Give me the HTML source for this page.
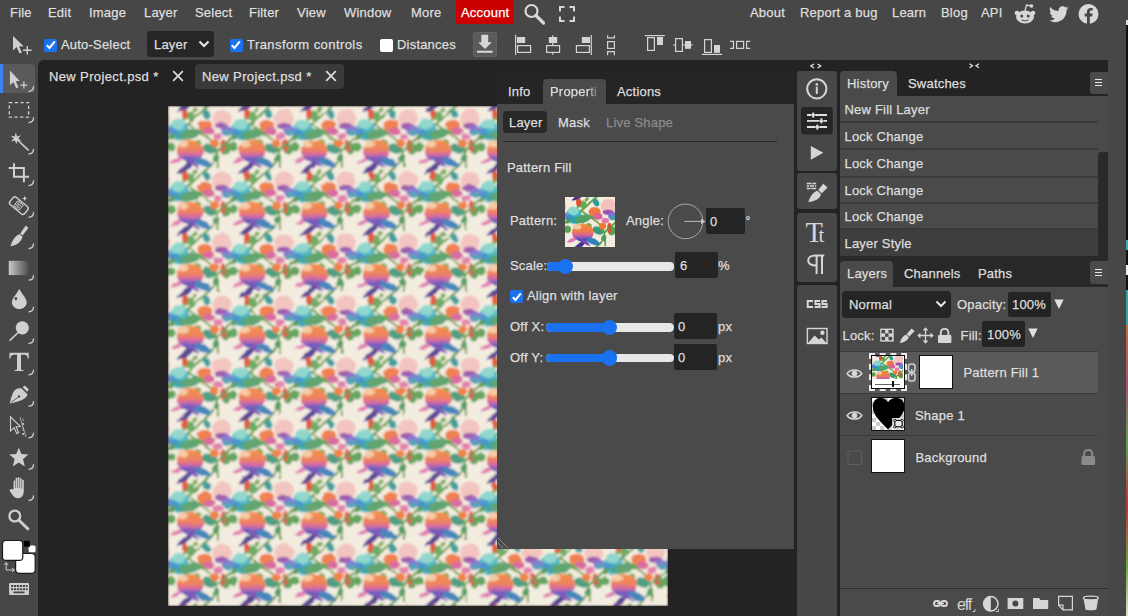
<!DOCTYPE html>
<html><head><meta charset="utf-8">
<style>
*{box-sizing:border-box}
html,body{margin:0;padding:0}
body{width:1128px;height:616px;overflow:hidden;position:relative;background:#474747;font-family:"Liberation Sans",sans-serif;font-size:13px;color:#dcdcdc}
.a{position:absolute}
.t{position:absolute;font-size:13px;line-height:13px;white-space:pre;color:#dedede;letter-spacing:0.2px;-webkit-text-stroke:0.25px currentColor}
.ic{position:absolute;overflow:visible}
.cb{position:absolute;width:13px;height:13px;background:#1a72f0;border-radius:2px}
.inp{position:absolute;background:#242424;border-radius:2px}
</style></head><body>

<!-- ===== MENU BAR ===== -->
<div class="t" style="left:10px;top:6px">File</div>
<div class="t" style="left:48px;top:6px">Edit</div>
<div class="t" style="left:89px;top:6px">Image</div>
<div class="t" style="left:144px;top:6px">Layer</div>
<div class="t" style="left:195px;top:6px">Select</div>
<div class="t" style="left:249px;top:6px">Filter</div>
<div class="t" style="left:297px;top:6px">View</div>
<div class="t" style="left:344px;top:6px">Window</div>
<div class="t" style="left:411px;top:6px">More</div>
<div class="a" style="left:456px;top:0;width:58px;height:24px;background:#cc0000;border-radius:0 0 2px 2px"></div>
<div class="t" style="left:461px;top:6px;color:#fff">Account</div>

<div class="t" style="left:750px;top:6px">About</div>
<div class="t" style="left:800px;top:6px">Report a bug</div>
<div class="t" style="left:892px;top:6px">Learn</div>
<div class="t" style="left:941px;top:6px">Blog</div>
<div class="t" style="left:981px;top:6px">API</div>


<!-- search icon -->
<svg class="ic" style="left:522px;top:2px" width="26" height="24" viewBox="0 0 26 24"><circle cx="9.5" cy="9" r="6" fill="none" stroke="#d8d8d8" stroke-width="2.2"/><path d="M14 13.5 L21.5 21" stroke="#d8d8d8" stroke-width="3.2" stroke-linecap="round"/></svg>
<!-- fullscreen -->
<svg class="ic" style="left:559px;top:6px" width="16" height="16" viewBox="0 0 16 16"><path d="M1 5.5V1H5.5 M10.5 1H15V5.5 M15 10.5V15H10.5 M5.5 15H1V10.5" fill="none" stroke="#d8d8d8" stroke-width="2"/></svg>
<!-- reddit -->
<svg class="ic" style="left:1014px;top:3px" width="22" height="22" viewBox="0 0 22 22"><ellipse cx="11" cy="14" rx="9" ry="6.5" fill="#d8d8d8"/><circle cx="3" cy="10" r="2.3" fill="#d8d8d8"/><circle cx="19" cy="10" r="2.3" fill="#d8d8d8"/><path d="M11 8 L12.5 2 L17 3" fill="none" stroke="#d8d8d8" stroke-width="1.3"/><circle cx="17.5" cy="3" r="1.8" fill="#d8d8d8"/><circle cx="7.8" cy="13" r="1.5" fill="#474747"/><circle cx="14.2" cy="13" r="1.5" fill="#474747"/><path d="M7.5 17 Q11 19 14.5 17" fill="none" stroke="#474747" stroke-width="1"/></svg>
<!-- twitter -->
<svg class="ic" style="left:1049px;top:6px" width="20" height="17" viewBox="0 0 24 20"><path d="M23.6 2.3c-.9.4-1.8.6-2.8.8 1-.6 1.8-1.6 2.1-2.7-.9.6-2 1-3.1 1.2C18.9.6 17.6 0 16.2 0c-2.7 0-4.8 2.2-4.8 4.8 0 .4 0 .8.1 1.1C7.4 5.7 3.9 3.8 1.6.9c-.4.7-.7 1.6-.7 2.4 0 1.7.9 3.2 2.2 4-.8 0-1.5-.2-2.2-.6v.1c0 2.3 1.7 4.3 3.9 4.7-.4.1-.8.2-1.3.2-.3 0-.6 0-.9-.1.6 1.9 2.4 3.3 4.5 3.4-1.7 1.3-3.7 2.1-6 2.1-.4 0-.8 0-1.2-.1 2.1 1.4 4.7 2.2 7.4 2.2 8.9 0 13.7-7.4 13.7-13.7v-.6c1-.7 1.8-1.6 2.4-2.6z" fill="#d8d8d8"/></svg>
<!-- facebook -->
<svg class="ic" style="left:1078px;top:4px" width="21" height="20" viewBox="0 0 21 20"><circle cx="10.5" cy="10" r="10" fill="#d8d8d8"/><path d="M11.8 20V12.4H14.2L14.6 9.6H11.8V7.9C11.8 7.1 12.1 6.5 13.2 6.5H14.7V4C14.4 4 13.5 3.9 12.6 3.9 10.5 3.9 9 5.2 9 7.5V9.6H6.7V12.4H9V20Z" fill="#474747"/></svg>

<!-- ===== OPTIONS BAR ===== -->
<div class="cb" style="left:44px;top:38.5px"></div>
<div class="t" style="left:61px;top:38px">Auto-Select</div>
<div class="a" style="left:147px;top:31px;width:67px;height:26px;background:#262626;border-radius:3px"></div>
<div class="t" style="left:154px;top:38px">Layer</div>
<div class="cb" style="left:230px;top:39px"></div>
<div class="t" style="left:247px;top:38px;letter-spacing:0.43px">Transform controls</div>
<div class="a" style="left:380px;top:39px;width:13px;height:13px;background:#fff;border-radius:2px"></div>
<div class="t" style="left:397px;top:38px">Distances</div>
<div class="a" style="left:473px;top:32px;width:24px;height:25px;background:#5a5a5a;border:1px solid #626262;border-radius:2px"></div>


<!-- move icon -->
<svg class="ic" style="left:0;top:28px" width="40" height="30" viewBox="0 28 40 30"><path d="M13 36 L13 50.5 L16.6 47 L19.6 53.6 L21.9 52.6 L19 46.4 L23.6 46.2 Z" fill="#d0d0d0"/><path d="M27.3 46 V54.6 M23 50.3 H31.6" stroke="#d0d0d0" stroke-width="1.4"/></svg>
<!-- checkmarks -->
<svg class="ic" style="left:44px;top:38px" width="14" height="14" viewBox="0 0 14 14"><path d="M2.8 7.3 L5.5 10 L10.8 3.4" fill="none" stroke="#fff" stroke-width="2"/></svg>
<svg class="ic" style="left:229px;top:38px" width="14" height="14" viewBox="0 0 14 14"><path d="M2.8 7.3 L5.5 10 L10.8 3.4" fill="none" stroke="#fff" stroke-width="2"/></svg>
<!-- chevron -->
<svg class="ic" style="left:198px;top:40px" width="12" height="8" viewBox="0 0 12 8"><path d="M1.5 1.5 L6 6 L10.5 1.5" fill="none" stroke="#e8e8e8" stroke-width="2"/></svg>
<!-- download arrow -->
<svg class="ic" style="left:473px;top:32px" width="24" height="25" viewBox="0 0 24 25"><path d="M8.3 2.8 H15.2 V10.3 H18.9 L12 17.1 L5.2 10.3 H8.3 Z" fill="#d6d6d6"/><rect x="4" y="18.7" width="15.5" height="2.1" fill="#d6d6d6"/></svg>
<!-- align icons -->
<svg class="ic" style="left:510px;top:30px" width="245" height="28" viewBox="510 30 245 28">
<g fill="none" stroke="#d4d4d4" stroke-width="1.2">
 <path d="M515.6 34.8 V55"/><rect x="517.6" y="45.6" width="13" height="6.8"/>
 <path d="M552.8 35.2 V37 M552.8 43 V45 M552.8 53 V54.7"/><rect x="546.6" y="45.6" width="13" height="6.8"/>
 <path d="M591.3 35 V55"/><rect x="576.4" y="45.6" width="13" height="6.8"/>
 <path d="M607.6 35.2 V37.8 H614.4 V35.2 M607.6 55.2 V51.7 H614.4 V55.2"/><rect x="607.6" y="41.6" width="6.8" height="6.8"/>
 <path d="M644.9 35.6 H664.9"/><rect x="647.6" y="37.6" width="6.8" height="12.8"/>
 <path d="M672.9 45 H675 M683 45 H685 M691 45 H693"/><rect x="675.6" y="38.6" width="6.8" height="12.8"/>
 <path d="M701.7 54.4 H722.3"/><rect x="704.6" y="39.6" width="6.8" height="12.8"/>
 <path d="M730 41.4 H733.5 V48.4 H730 M750.2 41.4 H746.6 V48.4 H750.2"/><rect x="736.6" y="41.4" width="7" height="7"/>
</g>
<g fill="#d4d4d4">
 <rect x="517" y="37" width="8.2" height="6"/>
 <rect x="548.8" y="37" width="8.4" height="6"/>
 <rect x="581.8" y="37" width="8.2" height="6"/>
 <rect x="657" y="37" width="6" height="8"/>
 <rect x="685" y="41" width="6" height="7.8"/>
 <rect x="714" y="45" width="6" height="7.8"/>
</g>
</svg>

<!-- ===== WORKSPACE ===== -->
<div class="a" style="left:38px;top:60px;width:1090px;height:556px;background:#232323;border-radius:6px 0 0 0"></div>
<!-- tabs -->
<div class="t" style="left:49px;top:70px;letter-spacing:0.37px">New Project.psd *</div>
<div class="a" style="left:195px;top:64px;width:148.5px;height:25px;background:#3a3a3a;border-radius:4px"></div>
<div class="t" style="left:202px;top:70px;letter-spacing:0.37px">New Project.psd *</div>

<svg class="ic" style="left:172px;top:70px" width="12" height="12" viewBox="0 0 12 12"><path d="M1.2 1.2 L10.8 10.8 M10.8 1.2 L1.2 10.8" stroke="#dcdcdc" stroke-width="1.7"/></svg>
<svg class="ic" style="left:325px;top:70px" width="12" height="12" viewBox="0 0 12 12"><path d="M1.2 1.2 L10.8 10.8 M10.8 1.2 L1.2 10.8" stroke="#dcdcdc" stroke-width="1.7"/></svg>
<!-- canvas -->
<svg class="a" style="left:168px;top:106px" width="500" height="500">
<defs>
<filter id="bl" x="0" y="0" width="500" height="500" filterUnits="userSpaceOnUse"><feTurbulence type="fractalNoise" baseFrequency="0.12" numOctaves="2" seed="3" result="n"/><feDisplacementMap in="SourceGraphic" in2="n" scale="3" xChannelSelector="R" yChannelSelector="G" result="d"/><feGaussianBlur in="d" stdDeviation="1.1" result="b"/><feComponentTransfer in="b"><feFuncR type="linear" slope="0.96" intercept="0.04"/><feFuncG type="linear" slope="0.96" intercept="0.04"/><feFuncB type="linear" slope="0.96" intercept="0.04"/></feComponentTransfer></filter>
<linearGradient id="fg" x1="0" y1="0" x2="0" y2="1"><stop offset="0" stop-color="#f28a34"/><stop offset="0.45" stop-color="#ee7a50"/><stop offset="0.65" stop-color="#d8609c"/><stop offset="0.85" stop-color="#6a50c0"/><stop offset="1" stop-color="#4a3aa0"/></linearGradient>
<g id="tl">
 <path d="M-14 46 L0 33 C4 30 8 28 10 26 C14 23 17 20 20 18 C24 15 27 12 30 9 C33 6 37 3 40 0 L46 -6" fill="none" stroke="#5f9a3a" stroke-width="2.3"/>
 <path d="M20 18 C24 21 27 23 30 25 C34 28 37 30 40 32 C44 35 46 38 47 40 C49 46 50 54 50 62" fill="none" stroke="#6e9e44" stroke-width="2.1"/>
 <g transform="translate(11.5 24) scale(1.15) translate(-10 -21)">
 <ellipse cx="9.5" cy="21" rx="8.5" ry="9" fill="#3fb6c2"/>
 <ellipse cx="9" cy="16" rx="6" ry="4.5" fill="#8ad6cc"/>
 <ellipse cx="5" cy="23.5" rx="4" ry="3.5" fill="#2f8fd0"/>
 <ellipse cx="13" cy="26" rx="6" ry="4" fill="#2aa0a0"/>
 </g>
 <g transform="translate(22 28) scale(1.25) translate(-22 -28)"><ellipse cx="22.5" cy="28" rx="8" ry="4" fill="#52a066" transform="rotate(-15 22.5 28)"/></g>
 <g transform="translate(41 42) scale(1.3) translate(-41 -42)"><ellipse cx="41" cy="42.5" rx="5.5" ry="3.5" fill="#3a9a7a" transform="rotate(25 41 42.5)"/></g>
 <ellipse cx="22" cy="10" rx="4.5" ry="4.5" fill="#5ea85a"/>
 <ellipse cx="3" cy="41" rx="4.5" ry="4.5" fill="#5aa050"/>
 <ellipse cx="58" cy="43" rx="4.5" ry="5.5" fill="#58a04e"/>
 <ellipse cx="38.5" cy="8" rx="3.5" ry="5" fill="#2a9a9a" transform="rotate(-30 38.5 8)"/>
 <ellipse cx="30" cy="36" rx="3.5" ry="2.5" fill="#6aa84a" transform="rotate(30 30 36)"/>
 <ellipse cx="4" cy="31" rx="3.5" ry="2.5" fill="#4e9a50" transform="rotate(-40 4 31)"/>
 <ellipse cx="17" cy="12" rx="3" ry="2" fill="#6aa84a" transform="rotate(-40 17 12)"/>
 <ellipse cx="33" cy="26" rx="3.5" ry="2" fill="#5aa050" transform="rotate(35 33 26)"/>
 <ellipse cx="48" cy="52" rx="3" ry="4" fill="#4a9a58" transform="rotate(20 48 52)"/>
 <ellipse cx="27" cy="4" rx="3" ry="2" fill="#74a848" transform="rotate(-45 27 4)"/>
 <!-- pink flower -->
 <g transform="translate(50 24) scale(1.15) translate(-47 -21)">
 <ellipse cx="50.5" cy="11" rx="8.5" ry="8" fill="#f3c2be"/>
 <ellipse cx="50" cy="17.5" rx="6" ry="2.8" fill="#9a50a8"/>
 <ellipse cx="35.5" cy="17" rx="6.5" ry="5" fill="#f07840"/>
 <ellipse cx="39" cy="22" rx="5" ry="3.5" fill="#d8609a"/>
 <ellipse cx="55" cy="21.5" rx="5" ry="4.5" fill="#8070d0"/>
 <ellipse cx="55.5" cy="23.5" rx="3.5" ry="2.5" fill="#40a0b0"/>
 <ellipse cx="47" cy="26.5" rx="4" ry="3" fill="#e07aa8"/>
 <ellipse cx="44" cy="32.5" rx="4" ry="3.5" fill="#f07a30"/>
 <ellipse cx="51.5" cy="34.5" rx="2.5" ry="5.5" fill="#e04a40"/>
 </g>
 <!-- big flower -->
 <g id="bf">
 <g transform="translate(21 49) scale(1.15) translate(-21 -47)">
 <ellipse cx="22" cy="43.5" rx="11.5" ry="9.5" fill="url(#fg)"/>
 <ellipse cx="16" cy="37.5" rx="4.5" ry="3" fill="#f5c8a0"/>
 <path d="M27 49 C32 49 38 51 41 57 C36 58 30 56 26 53 Z" fill="#2f7fb8"/>
 <path d="M22 52 C18 55 13 59 10 63 C16 63 21 60 24 55 Z" fill="#4a3090"/>
 <path d="M13 49 C10 50 6 52 5 54 C9 55 13 53 15 51 Z" fill="#e07ab0"/>
 <path d="M20 52 C22 55 26 57 30 58 C28 55 25 52 22 51 Z" fill="#7a48b8"/>
 <ellipse cx="17.5" cy="65" rx="2.5" ry="4" fill="#e0502a"/>
 </g>
 </g>
 <use href="#bf" y="-62"/>
</g>
<pattern id="pt" width="62" height="62" patternUnits="userSpaceOnUse">
 <rect width="62" height="62" fill="#f3ecdf"/>
 <use href="#tl"/><use href="#tl" x="62"/><use href="#tl" x="-62"/>
 <use href="#tl" y="62"/><use href="#tl" x="62" y="62"/><use href="#tl" x="-62" y="62"/>
 <use href="#tl" y="-62"/><use href="#tl" x="62" y="-62"/><use href="#tl" x="-62" y="-62"/>
</pattern>
</defs>
<g filter="url(#bl)"><rect x="-10" y="-10" width="520" height="520" fill="url(#pt)"/></g>
</svg>


<!-- ===== LEFT TOOLBAR ===== -->
<div class="a" style="left:0;top:60px;width:38px;height:556px;background:#474747"></div>
<div class="a" style="left:0;top:64px;width:35px;height:29px;background:#5a5a5a;border-radius:0 4px 4px 0"></div>
<div class="a" style="left:0;top:64px;width:3px;height:29px;background:#3b82f6"></div>


<svg class="ic" style="left:0;top:60px" width="38" height="556" viewBox="0 60 38 556">
<defs><path id="cm" d="M0 0 Q0 5 -5 5" fill="none" stroke="#cfcfcf" stroke-width="1.3"/></defs>
<g fill="#d0d0d0">
 <!-- move -->
 <path d="M9.9 70.5 L9.9 85.2 L13.4 81.9 L16.2 88.3 L18.4 87.3 L15.7 81 L19.7 80.9 Z"/>
 <path d="M23.9 81.6 V88.6 M20.4 85.1 H27.4" stroke="#d0d0d0" stroke-width="1.3"/>
 <use href="#cm" x="33.5" y="86.3"/>
 <!-- rect select -->
 <rect x="9.3" y="102.6" width="19.3" height="14.6" fill="none" stroke="#d0d0d0" stroke-width="1.3" stroke-dasharray="3.2 2.4"/>
 <use href="#cm" x="33.5" y="117.6"/>
 <!-- wand -->
 <path d="M15.9 132.5 L17 136.4 L21 135.2 L18.2 138.3 L21.4 141 L17.4 140.3 L16.4 144.2 L15 140.4 L11 141.6 L13.8 138.5 L10.6 135.8 L14.6 136.5 Z"/>
 <path d="M17 139.5 L28.6 150.3" stroke="#d0d0d0" stroke-width="1.6"/>
 <use href="#cm" x="33.5" y="149"/>
 <!-- crop -->
 <path d="M14 163.2 V176.7 H29 M8.7 168 H23.9 V182.2" fill="none" stroke="#d0d0d0" stroke-width="2"/>
 <use href="#cm" x="33.5" y="180.6"/>
 <!-- heal -->
 <g transform="rotate(40 19 205.5)"><rect x="9.5" y="201" width="19" height="9.5" rx="2.5" fill="none" stroke="#d0d0d0" stroke-width="1.4"/><rect x="15" y="202.5" width="7" height="6.5" fill="none" stroke="#d0d0d0" stroke-width="0.9"/><path d="M17 202.5 V209 M19 202.5 V209 M15 204.7 H22 M15 206.9 H22" stroke="#d0d0d0" stroke-width="0.7"/></g>
 <path d="M24.7 195.8 L25.6 198 L27.8 198.2 L25.6 198.9 L24.7 201 L23.8 198.9 L21.6 198.2 L23.8 198 Z"/>
 <use href="#cm" x="33.5" y="212.3"/>
 <!-- brush -->
 <path d="M25.8 225.6 L28.4 228 L22.6 235.6 L20.2 233.6 Z"/>
 <path d="M19.6 234 L22.4 236.4 C22 241 17.5 245 10.4 246.2 C12 241.5 14.5 236 19.6 234 Z"/>
 <use href="#cm" x="33.5" y="243.6"/>
 <!-- gradient -->
 <use href="#cm" x="33.5" y="275.2"/>
 <!-- drop -->
 <path d="M19.3 289 C22 294 26.7 298.5 26.7 302.2 C26.7 306 23.4 309 19.3 309 C15.2 309 11.9 306 11.9 302.2 C11.9 298.5 16.6 294 19.3 289 Z"/>
 <ellipse cx="15.9" cy="298.6" rx="1.4" ry="1.6" fill="#474747"/>
 <use href="#cm" x="33.5" y="306.8"/>
 <!-- dodge -->
 <circle cx="22.3" cy="327.8" r="6.6"/>
 <path d="M18.2 332.5 L9.6 340.7" stroke="#d0d0d0" stroke-width="1.6"/>
 <use href="#cm" x="33.5" y="338.4"/>
 <!-- T -->
 <path d="M9.6 352.8 H28.6 L28.9 358.5 L27.8 358.5 C27.3 355.5 26.4 354.8 23.6 354.8 H21 V368.7 C21 369.8 21.6 370 23.4 370.1 V371 H14.6 V370.1 C16.5 370 17 369.8 17 368.7 V354.8 H14.6 C11.8 354.8 10.9 355.5 10.4 358.5 L9.3 358.5 Z"/>
 <use href="#cm" x="33.5" y="369.8"/>
 <!-- pen -->
 <path d="M22.6 387.2 L24.8 385.6 L28.8 389.6 L27.2 391.8 Z"/>
 <path d="M21.6 388.4 L27.6 394.4 C26.4 398.5 21 401 9.6 403.6 C12.2 392.4 14.6 386.8 21.6 388.4 Z"/>
 <circle cx="19" cy="396.4" r="1.2" fill="#474747"/>
 <path d="M18.5 397 L10.8 402.5" stroke="#474747" stroke-width="0.8"/>
 <use href="#cm" x="33.5" y="401.2"/>
 <!-- path select -->
 <path d="M10.5 416.8 L10.5 431 L14 427.6 L16.8 433.6 L18.7 432.7 L16.1 426.8 L20.4 426.6 Z" fill="none" stroke="#d0d0d0" stroke-width="1.1"/>
 <circle cx="23.1" cy="424" r="1.1"/><circle cx="23.1" cy="434" r="1.1"/>
 <path d="M23.1 418.5 V421 M23.1 427 V431 M20 417 L26 437" stroke="#d0d0d0" stroke-width="0.7"/>
 <use href="#cm" x="33.5" y="432.8"/>
 <!-- star -->
 <path d="M18.8 447.8 L21.4 454.1 L28.4 454.6 L23 459 L24.8 466.4 L18.8 462.4 L12.8 466.4 L14.6 459 L9.2 454.6 L16.2 454.1 Z"/>
 <use href="#cm" x="33.5" y="464.3"/>
 <!-- hand -->
 <path d="M13.6 489 V481.5 C13.6 480.2 15.6 480.2 15.6 481.5 V478.8 C15.6 477.5 17.6 477.5 17.6 478.8 V478.2 C17.6 476.9 19.6 476.9 19.6 478.2 V479.2 C19.6 477.9 21.6 477.9 21.6 479.2 L21.9 480.6 C21.9 479.4 23.8 479.4 23.8 480.6 V491 C23.8 495.5 21.6 498.2 18 498.2 C15.2 498.2 13.5 496.6 11.8 494 L9.8 490.8 C9.2 489.6 10.8 488.2 12 489.4 Z"/>
 <path d="M15.6 481 V488 M17.6 478.5 V488 M19.6 478.5 V488 M21.7 480 V488.5" stroke="#474747" stroke-width="0.6"/>
 <use href="#cm" x="33.5" y="495.4"/>
 <!-- zoom -->
 <circle cx="14.8" cy="516" r="5.4" fill="none" stroke="#d0d0d0" stroke-width="2.3"/>
 <path d="M19 520.2 L27.8 528.8" stroke="#d0d0d0" stroke-width="3" stroke-linecap="round"/>
 <!-- keyboard -->
 <rect x="9.1" y="583" width="19.9" height="12" rx="1" />
 <g fill="#474747"><rect x="11" y="585" width="2.2" height="2"/><rect x="14" y="585" width="2.2" height="2"/><rect x="17" y="585" width="2.2" height="2"/><rect x="20" y="585" width="2.2" height="2"/><rect x="23" y="585" width="2.2" height="2"/><rect x="26" y="585" width="1.6" height="2"/>
 <rect x="11" y="588.2" width="2.2" height="2"/><rect x="14" y="588.2" width="2.2" height="2"/><rect x="17" y="588.2" width="2.2" height="2"/><rect x="20" y="588.2" width="2.2" height="2"/><rect x="23" y="588.2" width="2.2" height="2"/><rect x="26" y="588.2" width="1.6" height="2"/>
 <rect x="13.5" y="591.5" width="11" height="1.8"/></g>
</g>
<defs><linearGradient id="gr" x1="0" x2="1"><stop offset="0" stop-color="#c8c8c8"/><stop offset="1" stop-color="#505050"/></linearGradient></defs>
<rect x="8.75" y="260.8" width="19.5" height="14.3" fill="url(#gr)"/>
<!-- color swatches -->
<rect x="15.6" y="553.5" width="19.6" height="19.8" rx="3.5" fill="#fff" stroke="#1a1a1a" stroke-width="1.2"/>
<rect x="2.5" y="540.5" width="20.3" height="19.9" rx="3.5" fill="#fff" stroke="#1a1a1a" stroke-width="1.2"/>
<rect x="28.6" y="545.6" width="7" height="6.7" rx="1.5" fill="#fff"/>
<rect x="23.5" y="540.5" width="6.5" height="6.5" rx="1.2" fill="#000" stroke="#555" stroke-width="0.5"/>
<path d="M6.2 563.5 V570 H13.5 M4.4 565 L6.2 562.4 L8 565 M12 568.2 L14.6 570 L12 571.8" fill="none" stroke="#cfcfcf" stroke-width="1"/>
</svg>

<!-- ===== PROPERTIES PANEL ===== -->
<div class="a" style="left:497px;top:71px;width:297px;height:33px;background:#252525"></div>
<div class="a" style="left:543px;top:79px;width:63px;height:26px;background:#4a4a4a;border-radius:4px 4px 0 0"></div>
<div class="t" style="left:508px;top:85px">Info</div>
<div class="t" style="left:550px;top:85px;-webkit-mask-image:linear-gradient(90deg,#000 38px,transparent 50px)">Properti</div>
<div class="t" style="left:617px;top:85px">Actions</div>
<div class="a" style="left:497px;top:104px;width:297px;height:445px;background:#4a4a4a"></div>


<!-- properties content -->
<div class="a" style="left:503px;top:111px;width:44px;height:22px;background:#282828;border-radius:4px"></div>
<div class="t" style="left:509px;top:116px">Layer</div>
<div class="t" style="left:558px;top:116px">Mask</div>
<div class="t" style="left:606px;top:116px;color:#8a8a8a">Live Shape</div>
<div class="a" style="left:503px;top:141px;width:274px;height:1px;background:#2a2a2a"></div>
<div class="t" style="left:507px;top:161px">Pattern Fill</div>
<div class="t" style="left:510px;top:214px">Pattern:</div>
<div class="a" style="left:565px;top:197px;width:50px;height:50px;overflow:hidden;background:#f3ecdf">
<svg width="50" height="50" viewBox="0 1 62 62" style="display:block;filter:blur(0.7px)"><rect x="-62" y="-62" width="200" height="200" fill="url(#pt)"/></svg>
</div>
<div class="t" style="left:626px;top:214px">Angle:</div>
<svg class="ic" style="left:666px;top:202px" width="42" height="40" viewBox="666 202 42 40"><circle cx="685.5" cy="221.4" r="17.3" fill="none" stroke="#a8a8a8" stroke-width="1"/><path d="M684.3 221.4 H702" stroke="#b8b8b8" stroke-width="1"/><path d="M701 218.8 L705.6 221.4 L701 224 Z" fill="#c8c8c8"/></svg>
<div class="inp" style="left:706px;top:208px;width:39px;height:25.6px"></div>
<div class="t" style="left:710px;top:215px">0</div>
<div class="t" style="left:745.5px;top:215px;font-size:12px">°</div>

<div class="t" style="left:510px;top:259px">Scale:</div>
<div class="a" style="left:547px;top:262.4px;width:127px;height:8.2px;background:#e8e8e8;border-radius:4px"></div>
<div class="a" style="left:547px;top:262.4px;width:19px;height:8.2px;background:#1a72f0;border-radius:4px 0 0 4px"></div>
<div class="a" style="left:558px;top:259px;width:15.4px;height:15.4px;background:#1a72f0;border-radius:50%"></div>
<div class="inp" style="left:675px;top:252px;width:43px;height:25.7px"></div>
<div class="t" style="left:680px;top:259px">6</div>
<div class="t" style="left:718px;top:259px">%</div>

<div class="cb" style="left:510px;top:290px"></div>
<svg class="ic" style="left:510px;top:290px" width="14" height="14" viewBox="0 0 14 14"><path d="M2.8 7.3 L5.5 10 L10.8 3.4" fill="none" stroke="#fff" stroke-width="2"/></svg>
<div class="t" style="left:527px;top:289px">Align with layer</div>

<div class="t" style="left:510px;top:320px">Off X:</div>
<div class="a" style="left:546px;top:323px;width:128px;height:8.8px;background:#e8e8e8;border-radius:4.4px"></div>
<div class="a" style="left:546px;top:323px;width:64px;height:8.8px;background:#1a72f0;border-radius:4.4px 0 0 4.4px"></div>
<div class="a" style="left:602px;top:319.7px;width:15.4px;height:15.4px;background:#1a72f0;border-radius:50%"></div>
<div class="inp" style="left:674px;top:313px;width:43px;height:25.8px"></div>
<div class="t" style="left:678px;top:320px">0</div>
<div class="t" style="left:718px;top:320px">px</div>

<div class="t" style="left:510px;top:351px">Off Y:</div>
<div class="a" style="left:546px;top:353.5px;width:128px;height:8.8px;background:#e8e8e8;border-radius:4.4px"></div>
<div class="a" style="left:546px;top:353.5px;width:64px;height:8.8px;background:#1a72f0;border-radius:4.4px 0 0 4.4px"></div>
<div class="a" style="left:602px;top:350.2px;width:15.4px;height:15.4px;background:#1a72f0;border-radius:50%"></div>
<div class="inp" style="left:674px;top:344px;width:43px;height:25.6px"></div>
<div class="t" style="left:678px;top:351px">0</div>
<div class="t" style="left:718px;top:351px">px</div>
<svg class="ic" style="left:497px;top:537px" width="14" height="12" viewBox="0 0 14 12"><path d="M1 1 L11 11 M1 6 L6 11" stroke="#9a9a9a" stroke-width="0.8"/></svg>

<!-- ===== ICON COLUMN ===== -->
<div class="a" style="left:797px;top:71px;width:40px;height:100px;background:#474747;border-radius:3px"></div>
<div class="a" style="left:797px;top:173px;width:40px;height:36px;background:#474747;border-radius:3px"></div>
<div class="a" style="left:797px;top:213px;width:40px;height:69px;background:#474747;border-radius:3px"></div>
<div class="a" style="left:797px;top:285px;width:40px;height:331px;background:#474747;border-radius:3px 3px 0 0"></div>


<svg class="ic" style="left:797px;top:60px" width="40" height="300" viewBox="797 60 40 300">
<path d="M814 64 L810.8 66 L814 68 M817.6 64 L820.8 66 L817.6 68" fill="none" stroke="#e8e8e8" stroke-width="1.2"/>
<circle cx="816.8" cy="88.8" r="9.6" fill="none" stroke="#d6d6d6" stroke-width="2"/>
<circle cx="816.8" cy="84.4" r="1.3" fill="#d6d6d6"/><rect x="815.8" y="86.7" width="2" height="7.2" fill="#d6d6d6"/>
<rect x="801" y="107" width="31.7" height="27.5" rx="3" fill="#262626"/>
<g stroke="#e0e0e0" stroke-width="1.8">
<path d="M807 115 H827 M807 120.8 H827 M807 127 H827"/>
</g>
<g fill="#e0e0e0"><rect x="812.2" y="112.6" width="2" height="5"/><rect x="820.4" y="118.3" width="2" height="5"/><rect x="816.3" y="124.6" width="2" height="5"/></g>
<g stroke="#262626" stroke-width="1"><path d="M811.7 115 H811 M814.7 115 H815.4 M819.9 120.8 H819.3 M822.9 120.8 H823.6 M815.8 127 H815.2 M818.8 127 H819.5"/></g>
<path d="M810.8 145.9 L823.3 152.8 L810.8 159.7 Z" fill="#d6d6d6"/>
<!-- brush group -->
<g stroke="#d6d6d6" stroke-width="1.5"><path d="M806.7 183.4 H816.2 M806.7 186 H816.2 M806.7 188.6 H816.2"/></g>
<g stroke="#474747" stroke-width="0.9"><path d="M812 182.5 V184.2 M809.5 185.2 V187 M814.5 185.2 V187 M811 187.8 V189.5"/></g>
<path d="M823.2 183.8 L827.6 187.6 L821.8 193.2 L818.2 190 Z" fill="#d6d6d6"/>
<path d="M817.4 190.8 L821 194 C820.2 198.4 815.8 201.4 808.4 202 C810 197 812.4 192.6 817.4 190.8 Z" fill="#d6d6d6"/>
<!-- Tt -->
<text x="805.6" y="242" font-family="Liberation Serif" font-size="28.5" fill="#d6d6d6">T</text>
<text x="818.6" y="242" font-family="Liberation Serif" font-size="21" fill="#d6d6d6">t</text>
<path d="M815.5 255.5 H824.3 M816.6 255.5 V274 M822 255.5 V274 M816.6 265.5 C811 265.5 808.2 263.4 808.2 260.5 C808.2 257.6 811 255.5 815.5 255.5" fill="none" stroke="#d6d6d6" stroke-width="2"/>
<!-- CSS -->
<g fill="none" stroke="#d6d6d6" stroke-width="2"><path d="M813 301 H807.7 V307.1 H813 M820 301 H815.4 V304 H819.6 V307.1 H814.6 M827 301 H822.4 V304 H826.6 V307.1 H821.6"/></g>
<!-- image -->
<rect x="807.4" y="328.5" width="19.6" height="15" fill="none" stroke="#d6d6d6" stroke-width="1.4"/>
<path d="M808 343 L814.6 335.5 L819 339.6 L821.4 337.6 L826.4 343 Z" fill="#d6d6d6"/>
<circle cx="822.4" cy="332.8" r="2.2" fill="#d6d6d6"/>
</svg>

<!-- ===== RIGHT PANELS ===== -->
<div class="a" style="left:1108px;top:60px;width:18px;height:556px;background:#474747"></div>
<div class="a" style="left:1126px;top:20px;width:2px;height:5px;background:#ddd"></div><div class="a" style="left:1126px;top:25px;width:2px;height:591px;background:linear-gradient(#111 0,#111 215px,#3ab0b0 215px,#3ab0b0 225px,#111 225px,#111 240px,#eee 240px,#eee 250px,#111 250px,#111 265px,#40a0a0 265px,#40a0a0 300px,#c07040 300px,#a05070 360px,#60a050 420px,#c03040 480px,#70a040 540px,#e0e0d0 591px)"></div>
<div class="a" style="left:840px;top:96px;width:268px;height:161px;background:#4a4a4a"></div>
<div class="a" style="left:840px;top:71px;width:57px;height:26px;background:#4a4a4a;border-radius:4px 4px 0 0"></div>
<div class="t" style="left:847px;top:77px">History</div>
<div class="t" style="left:908px;top:77px">Swatches</div>
<div class="a" style="left:840px;top:287px;width:268px;height:329px;background:#4a4a4a"></div>


<!-- markers -->
<svg class="ic" style="left:960px;top:60px" width="30" height="12" viewBox="960 60 30 12"><path d="M969.5 63.8 L972.5 65.8 L969.5 67.8 M979 63.8 L976 65.8 L979 67.8" fill="none" stroke="#e8e8e8" stroke-width="1.2"/></svg>
<!-- history menu btn -->
<div class="a" style="left:1090px;top:71.5px;width:18px;height:22.5px;background:#4a4a4a;border-radius:3px 0 0 3px"></div>
<svg class="ic" style="left:1090px;top:71px" width="18" height="24" viewBox="0 0 18 24"><path d="M5 8.5 H12 M5 11.5 H12 M5 14.5 H12" stroke="#e8e8e8" stroke-width="1"/></svg>
<!-- history rows -->
<div class="a" style="left:840px;top:121px;width:258px;height:2px;background:#3a3a3a"></div>
<div class="a" style="left:840px;top:148px;width:258px;height:2px;background:#3a3a3a"></div>
<div class="a" style="left:840px;top:175.5px;width:258px;height:2px;background:#3a3a3a"></div>
<div class="a" style="left:840px;top:202px;width:258px;height:2px;background:#3a3a3a"></div>
<div class="a" style="left:840px;top:228px;width:258px;height:2px;background:#3a3a3a"></div>
<div class="a" style="left:840px;top:230px;width:258px;height:26px;background:#3e3e3e"></div>
<div class="a" style="left:1098px;top:151.5px;width:10px;height:105px;background:#2a2a2a;border-radius:3px 0 0 0"></div>
<div class="t" style="left:844.5px;top:103px">New Fill Layer</div>
<div class="t" style="left:844.5px;top:130px">Lock Change</div>
<div class="t" style="left:844.5px;top:157px">Lock Change</div>
<div class="t" style="left:844.5px;top:184px">Lock Change</div>
<div class="t" style="left:844.5px;top:210px">Lock Change</div>
<div class="t" style="left:844.5px;top:237px">Layer Style</div>
<!-- layers header -->
<div class="a" style="left:840px;top:256px;width:268px;height:31px;background:#282828"></div>
<div class="a" style="left:840px;top:261px;width:53px;height:27px;background:#4a4a4a;border-radius:4px 4px 0 0"></div>
<div class="t" style="left:847px;top:267px">Layers</div>
<div class="t" style="left:904px;top:267px">Channels</div>
<div class="t" style="left:978px;top:267px">Paths</div>
<div class="a" style="left:1090px;top:261px;width:18px;height:23px;background:#4a4a4a;border-radius:3px 0 0 3px"></div>
<svg class="ic" style="left:1090px;top:261px" width="18" height="24" viewBox="0 0 18 24"><path d="M5 8.5 H12 M5 11.5 H12 M5 14.5 H12" stroke="#e8e8e8" stroke-width="1"/></svg>
<!-- blend + opacity -->
<div class="a" style="left:842px;top:291px;width:109px;height:26.5px;background:#252525;border-radius:4px"></div>
<div class="t" style="left:849px;top:298px">Normal</div>
<svg class="ic" style="left:935px;top:300px" width="12" height="8" viewBox="0 0 12 8"><path d="M1.5 1.5 L6 6 L10.5 1.5" fill="none" stroke="#e8e8e8" stroke-width="2"/></svg>
<div class="t" style="left:957px;top:298px">Opacity:</div>
<div class="inp" style="left:1008px;top:291.5px;width:43px;height:25px"></div>
<div class="t" style="left:1012px;top:298px">100%</div>
<svg class="ic" style="left:1053px;top:298px" width="12" height="12" viewBox="0 0 12 12"><path d="M1.3 1.5 H10.7 L6 10.9 Z" fill="#e0e0e0"/></svg>
<div class="t" style="left:842.5px;top:329px">Lock:</div>
<div class="t" style="left:960.5px;top:329px">Fill:</div>
<div class="inp" style="left:982px;top:321.3px;width:43px;height:25.7px"></div>
<div class="t" style="left:987px;top:328px">100%</div>
<svg class="ic" style="left:1027px;top:327px" width="12" height="12" viewBox="0 0 12 12"><path d="M1.3 1.5 H10.7 L6 10.9 Z" fill="#e0e0e0"/></svg>
<svg class="ic" style="left:876px;top:324px" width="80" height="22" viewBox="876 324 80 22">
 <rect x="880.2" y="328.6" width="13.5" height="13" fill="#d6d6d6"/>
 <g fill="#474747"><rect x="881.5" y="330" width="3.6" height="3.4"/><rect x="888.5" y="330" width="3.6" height="3.4"/><rect x="885.1" y="333.4" width="3.4" height="3.4"/><rect x="881.5" y="336.8" width="3.6" height="3.4"/><rect x="888.5" y="336.8" width="3.6" height="3.4"/></g>
 <path d="M911.6 328.4 L914.6 331 L909.4 336.4 L906.6 334 Z" fill="#d6d6d6"/>
 <path d="M906 334.6 L908.8 337 C908 340.4 904.4 342.6 899.8 343 C901 339 903 335.8 906 334.6 Z" fill="#d6d6d6"/>
 <path d="M925.5 328.5 V342.5 M918.5 335.5 H932.5" stroke="#d6d6d6" stroke-width="1.3"/>
 <path d="M923.5 330.5 L925.5 328.3 L927.5 330.5 M923.5 340.5 L925.5 342.7 L927.5 340.5 M920.5 333.5 L918.3 335.5 L920.5 337.5 M930.5 333.5 L932.7 335.5 L930.5 337.5" fill="none" stroke="#d6d6d6" stroke-width="1.3"/>
 <path d="M940.8 335.2 V332.6 C940.8 330.2 942.6 328.8 944.6 328.8 C946.6 328.8 948.4 330.2 948.4 332.6 V335.2" fill="none" stroke="#d6d6d6" stroke-width="1.8"/>
 <rect x="938" y="335" width="13.4" height="8" rx="1" fill="#d6d6d6"/>
</svg>
<!-- layer rows -->
<div class="a" style="left:840px;top:350.5px;width:258px;height:1.5px;background:#3a3a3a"></div>
<div class="a" style="left:840px;top:352px;width:258px;height:40.5px;background:#5a5a5a"></div>
<div class="a" style="left:840px;top:392.5px;width:258px;height:1.5px;background:#3a3a3a"></div>
<div class="a" style="left:840px;top:434.5px;width:258px;height:1.5px;background:#3a3a3a"></div>

<svg class="ic" style="left:844px;top:360px" width="22" height="110" viewBox="844 360 22 110">
 <g fill="none" stroke="#d6d6d6" stroke-width="1.5"><path d="M847.2 373.5 C850 368.8 858.8 368.8 861.8 373.5 C858.8 378.2 850 378.2 847.2 373.5 Z"/><path d="M847.2 415.5 C850 410.8 858.8 410.8 861.8 415.5 C858.8 420.2 850 420.2 847.2 415.5 Z"/></g>
 <circle cx="854.5" cy="373.5" r="2.8" fill="#d6d6d6"/><circle cx="854.5" cy="415.5" r="2.8" fill="#d6d6d6"/>
 <rect x="848" y="451" width="13.6" height="13.4" rx="1" fill="none" stroke="#5e5e5e" stroke-width="1.2"/>
</svg>
<!-- pattern fill thumb -->
<div class="a" style="left:869px;top:353px;width:38px;height:38px;border:2px dashed #e8e8e8"></div>
<div class="a" style="left:871px;top:355px;width:34px;height:33.5px;background:#fff;border:1.5px solid #111;overflow:hidden">
<svg width="31" height="23" viewBox="0 4 62 46" style="display:block;position:absolute;left:0;top:0;filter:blur(0.4px)"><rect x="-62" y="-62" width="200" height="200" fill="url(#pt)"/></svg>
<div class="a" style="left:3px;top:27.5px;width:25px;height:1.5px;background:#666"></div>
<div class="a" style="left:19.5px;top:25px;width:2px;height:6px;background:#111"></div>
</div>
<svg class="ic" style="left:907px;top:363px" width="10" height="20" viewBox="0 0 10 20"><rect x="1.5" y="1" width="6.5" height="8" rx="2.5" fill="none" stroke="#cfcfcf" stroke-width="1.5"/><rect x="1.5" y="10" width="6.5" height="8" rx="2.5" fill="none" stroke="#cfcfcf" stroke-width="1.5"/><path d="M4.75 6 V13" stroke="#cfcfcf" stroke-width="1.5"/></svg>
<div class="a" style="left:919px;top:355px;width:34px;height:33.5px;background:#fff;border:1.5px solid #111"></div>
<div class="t" style="left:963.5px;top:366px">Pattern Fill 1</div>
<!-- shape thumb -->
<div class="a" style="left:871px;top:396.5px;width:34px;height:34.5px;border:1.5px solid #111;overflow:hidden;background-color:#fff;background-image:linear-gradient(45deg,#ccc 25%,transparent 25%,transparent 75%,#ccc 75%),linear-gradient(45deg,#ccc 25%,transparent 25%,transparent 75%,#ccc 75%);background-size:8px 8px;background-position:0 0,4px 4px">
<svg width="34" height="34" viewBox="0 0 34 34" style="position:absolute;left:-1.5px;top:-1.5px"><path d="M17 6.2 C14 0 1.8 -0.5 1.8 11 C1.8 19 10 26 17 33.4 C24 26 33.6 19 33.6 11 C33.6 -0.5 20 0 17 6.2 Z" fill="#000"/><rect x="21.2" y="22" width="11.5" height="10.5" fill="#e8e8e8"/><rect x="23.8" y="24.4" width="7.4" height="6.4" fill="none" stroke="#000" stroke-width="1.1"/><g fill="#fff" stroke="#000" stroke-width="0.9"><circle cx="23.8" cy="24.4" r="1.2"/><circle cx="31.2" cy="24.4" r="1.2"/><circle cx="23.8" cy="30.8" r="1.2"/><circle cx="31.2" cy="30.8" r="1.2"/></g></svg>
</div>
<div class="t" style="left:915px;top:409px">Shape 1</div>
<div class="a" style="left:871px;top:439px;width:34px;height:34px;background:#fff;border:1.5px solid #111"></div>
<div class="t" style="left:915.5px;top:451px">Background</div>
<svg class="ic" style="left:1080px;top:448px" width="17" height="18" viewBox="0 0 17 18"><path d="M4.2 8 V5.8 C4.2 3.4 6 2 8.2 2 C10.4 2 12.2 3.4 12.2 5.8 V8" fill="none" stroke="#8a8a8a" stroke-width="2"/><rect x="1.5" y="8" width="13.6" height="9" rx="1.5" fill="#8a8a8a"/></svg>
<!-- footer -->
<div class="a" style="left:840px;top:587.5px;width:268px;height:1.5px;background:#2e2e2e"></div>
<svg class="ic" style="left:925px;top:592px" width="180" height="22" viewBox="925 592 180 22">
 <g fill="none" stroke="#d6d6d6" stroke-width="2"><rect x="934" y="601" width="6" height="5" rx="2.5"/><rect x="941" y="601" width="6" height="5" rx="2.5"/></g>
 <path d="M937 603.5 H944" stroke="#d6d6d6" stroke-width="1.5"/>
 <text x="957" y="610" font-family="Liberation Sans" font-size="16" fill="#d6d6d6" letter-spacing="-1.2">eff</text>
 <path d="M975 609 V611.5 H972.5 M998.5 609 V611.5 H996" fill="none" stroke="#d6d6d6" stroke-width="0.9"/>
 <circle cx="990.8" cy="603.8" r="7.2" fill="none" stroke="#d6d6d6" stroke-width="1.5"/>
 <path d="M990.8 596.6 A7.2 7.2 0 0 0 990.8 611 Z" fill="#d6d6d6"/>
 <rect x="1007.6" y="598" width="15.7" height="11" fill="#d6d6d6"/><circle cx="1015.4" cy="603.5" r="3" fill="#474747"/>
 <path d="M1033 598 H1039 L1040.5 600 H1048.2 V609 H1033 Z" fill="#d6d6d6"/>
 <path d="M1058.6 596.3 H1072.4 V609.8 H1063 L1058.6 605.2 Z M1058.6 605.2 H1063 V609.8" fill="none" stroke="#d6d6d6" stroke-width="1.2"/>
 <path d="M1083.4 597.6 H1098.4 L1096.4 609.2 C1096 610.6 1085.8 610.6 1085.4 609.2 Z" fill="#d6d6d6"/>
 <ellipse cx="1090.9" cy="598" rx="7.5" ry="1.8" fill="#474747" stroke="#d6d6d6" stroke-width="1.2"/>
</svg>

</body></html>
